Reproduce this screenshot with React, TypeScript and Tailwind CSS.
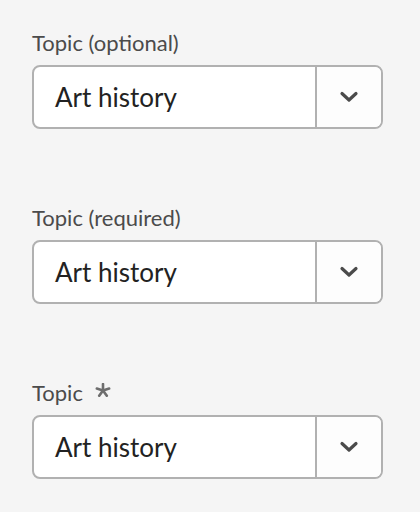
import React from 'react';

const Chevron = () => (
  <svg width="20" height="12" viewBox="0 0 20 12" fill="none">
    <path d="M3 2.5 L10 9 L17 2.5" stroke="#4b4b4b" strokeWidth="3.2" strokeLinecap="round" strokeLinejoin="round" />
  </svg>
);

const Asterisk = () => (
  <svg width="16" height="14" viewBox="0 0 16 14" fill="none" className="ml-[12px] mb-[6px]">
    <g stroke="#6e6e6e" strokeWidth="2.6" strokeLinecap="round">
      <path d="M8 7.5 L8 1" />
      <path d="M8 7.5 L1.8 5.6" />
      <path d="M8 7.5 L14.2 5.6" />
      <path d="M8 7.5 L4.2 12.8" />
      <path d="M8 7.5 L11.8 12.8" />
    </g>
  </svg>
);

const Field: React.FC<{ label: React.ReactNode }> = ({ label }) => (
  <div className="flex flex-col">
    <div className="text-[22px] leading-[26px] text-[#4b4b4b] h-[26px] mb-[9px]">{label}</div>
    <div className="flex h-[64px] w-[351px] rounded-[8px] border-2 border-[#b1b1b1] bg-white overflow-hidden">
      <div className="flex-1 flex items-center pl-[21px] text-[26px] text-[#222222]">Art history</div>
      <div className="w-[66px] border-l-2 border-[#b1b1b1] bg-[#fdfdfd] flex items-center justify-center">
        <Chevron />
      </div>
    </div>
  </div>
);

export default function App() {
  return (
    <div className="w-[420px] h-[512px] bg-[#f5f5f5] pl-[32px] pt-[30px] flex flex-col gap-[76px]" style={{ fontFamily: 'Lato, sans-serif' }}>
      <Field label="Topic (optional)" />
      <Field label="Topic (required)" />
      <Field
        label={
          <span className="flex items-center">
            Topic
            <Asterisk />
          </span>
        }
      />
    </div>
  );
}
